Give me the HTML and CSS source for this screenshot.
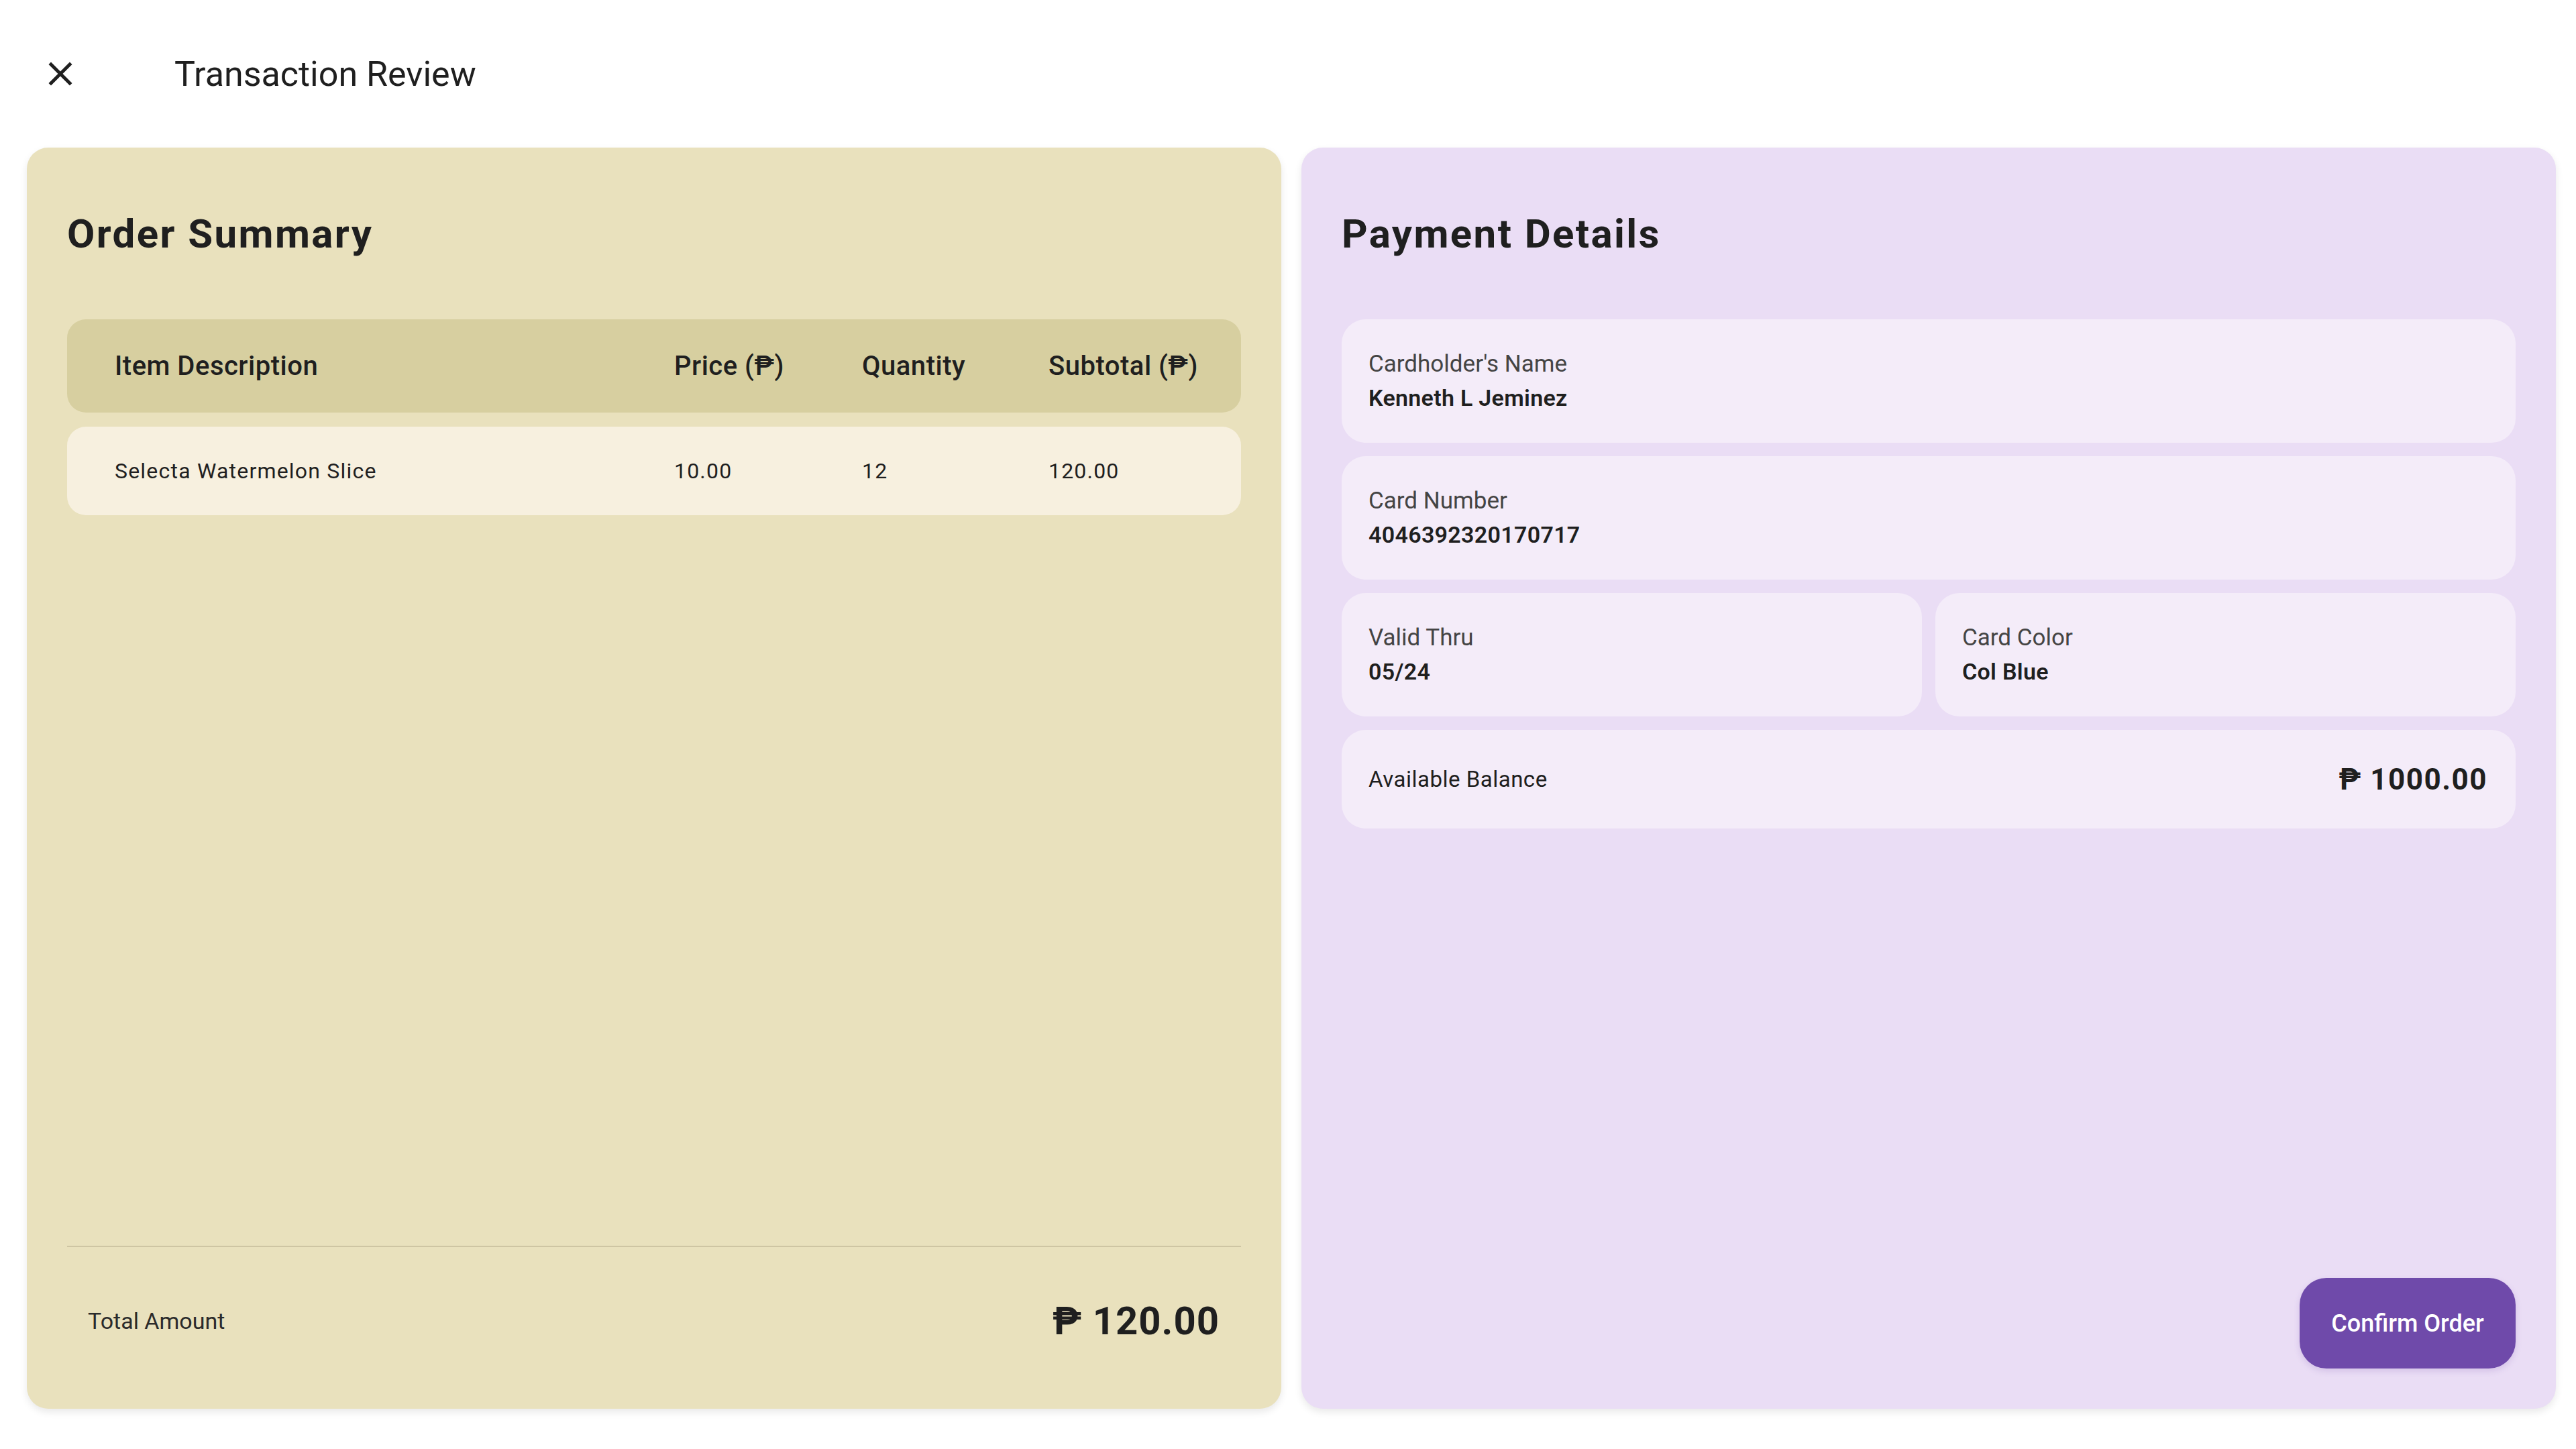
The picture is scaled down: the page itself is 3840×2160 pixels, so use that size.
FILE: index.html
```html
<!DOCTYPE html>
<html>
<head>
  <title>Transaction Review</title>
  <meta name="viewport" content="width=device-width, initial-scale=1">
  <link rel="stylesheet" href="styles.css">
</head>
<body>
  <header class="topbar">
    <button class="close-btn" aria-label="Close">
      <svg viewBox="0 0 24 24" width="60" height="60"><path d="M19 6.41L17.59 5 12 10.59 6.41 5 5 6.41 10.59 12 5 17.59 6.41 19 12 13.41 17.59 19 19 17.59 13.41 12z"/></svg>
    </button>
    <h1 class="page-title">Transaction Review</h1>
  </header>

  <main class="panels">
    <section class="card order-card">
      <h2 class="card-title">Order Summary</h2>
      <div class="table-row table-head">
        <span>Item Description</span>
        <span>Price (₱)</span>
        <span>Quantity</span>
        <span>Subtotal (₱)</span>
      </div>
      <div class="table-row table-item">
        <span>Selecta Watermelon Slice</span>
        <span>10.00</span>
        <span>12</span>
        <span>120.00</span>
      </div>
      <div class="spacer"></div>
      <div class="total-row">
        <span class="total-label">Total Amount</span>
        <span class="total-value">₱ 120.00</span>
      </div>
    </section>

    <section class="card payment-card">
      <h2 class="card-title">Payment Details</h2>
      <div class="info-box">
        <span class="info-label">Cardholder's Name</span>
        <span class="info-value">Kenneth L Jeminez</span>
      </div>
      <div class="info-box">
        <span class="info-label">Card Number</span>
        <span class="info-value">4046392320170717</span>
      </div>
      <div class="info-pair">
        <div class="info-box">
          <span class="info-label">Valid Thru</span>
          <span class="info-value">05/24</span>
        </div>
        <div class="info-box">
          <span class="info-label">Card Color</span>
          <span class="info-value">Col Blue</span>
        </div>
      </div>
      <div class="balance-box">
        <span class="balance-label">Available Balance</span>
        <span class="balance-value">₱ 1000.00</span>
      </div>
      <button class="confirm-btn" type="button">Confirm Order</button>
    </section>
  </main>
</body>
</html>
```

FILE: styles.css
```css
body {
  margin: 0;
  background-color: #fff;
  font-family: Roboto, "Noto Sans", sans-serif;
  color: #1f1f1f;
  height: 2160px;
  overflow: hidden;
}

.topbar {
  height: 220px;
  display: flex;
  align-items: center;
  padding-left: 60px;
  gap: 140px;
}

.close-btn {
  width: 60px;
  height: 60px;
  padding: 0;
  border: none;
  background: none;
  display: flex;
}

.close-btn svg {
  fill: #1f1f1f;
}

.page-title {
  margin: 0;
  font-size: 52px;
  font-weight: 400;
}

.panels {
  display: flex;
  gap: 30px;
  padding: 0 30px 0 40px;
  height: 1880px;
}

.card {
  flex: 1 1 0;
  min-width: 0;
  display: flex;
  flex-direction: column;
  padding: 60px;
  border-radius: 32px;
  box-shadow: 0 5px 12px rgba(0, 0, 0, 0.09);
}

.order-card {
  background-color: #e9e1bd;
}

.payment-card {
  background-color: #eaddf5;
}

.card-title {
  margin: 34px 0 92px;
  font-size: 60px;
  line-height: 70px;
  font-weight: 700;
  letter-spacing: 2.4px;
}

/* order table */
.table-row {
  display: grid;
  grid-template-columns: 834px 280px 278px 1fr;
  align-items: center;
  padding: 0 71px;
  border-radius: 28px;
  white-space: nowrap;
}

.table-head {
  height: 139px;
  background-color: #d7cfa0;
  font-size: 40px;
  font-weight: 500;
  letter-spacing: 0.5px;
}

.table-item {
  height: 132px;
  margin-top: 21px;
  background-color: #f7f0df;
  font-size: 32px;
  letter-spacing: 1.2px;
}

.spacer {
  flex: 1;
  border-bottom: 2px solid #cec5a3;
}

.total-row {
  height: 181px;
  box-sizing: border-box;
  padding: 38px 32px 0 31px;
  display: flex;
  align-items: center;
  justify-content: space-between;
}

.total-label {
  font-size: 34px;
  color: #2b2b2b;
}

.total-value {
  font-size: 58px;
  font-weight: 700;
  letter-spacing: 1px;
}

/* payment boxes */
.info-box {
  height: 184px;
  box-sizing: border-box;
  display: flex;
  flex-direction: column;
  justify-content: center;
  padding: 0 40px;
  margin-bottom: 20px;
  border-radius: 36px;
  background-color: #f4ecf9;
}

.info-label {
  font-size: 35px;
  line-height: 50px;
  color: #444;
}

.info-value {
  font-size: 34px;
  line-height: 50px;
  font-weight: 600;
  letter-spacing: 0.3px;
}

.info-pair {
  display: flex;
  gap: 20px;
}

.info-pair .info-box {
  flex: 1;
}

.balance-box {
  height: 147px;
  display: flex;
  align-items: center;
  justify-content: space-between;
  padding: 0 42px 0 40px;
  border-radius: 36px;
  background-color: #f4ecf9;
}

.balance-label {
  font-size: 33px;
  letter-spacing: 0.5px;
}

.balance-value {
  font-size: 44px;
  font-weight: 700;
  letter-spacing: 1.5px;
}

.confirm-btn {
  margin-top: auto;
  align-self: flex-end;
  width: 322px;
  height: 135px;
  border: none;
  border-radius: 40px;
  background-color: #6f4aaa;
  color: #fff;
  font-family: inherit;
  font-size: 36px;
  font-weight: 500;
  box-shadow: 0 4px 10px rgba(111, 74, 170, 0.18);
  cursor: pointer;
}

.confirm-btn:hover {
  background-color: #613f99;
}
```
